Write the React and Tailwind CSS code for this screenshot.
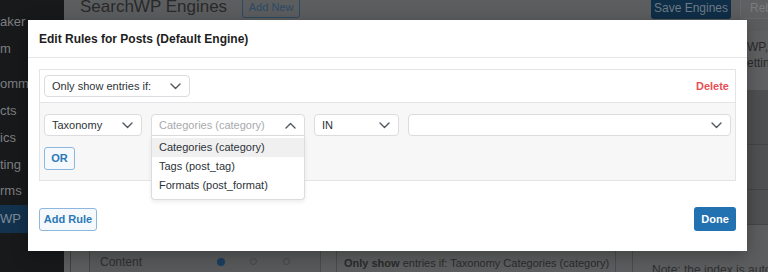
import React from "react";

const font = { fontFamily: "'Liberation Sans', Arial, sans-serif" };

function Chevron({ up = false, className = "" }) {
  return (
    <svg width="11" height="7" viewBox="0 0 11 7" className={className}>
      <path
        d={up ? "M1 6 L5.5 1.5 L10 6" : "M1 1 L5.5 5.5 L10 1"}
        fill="none"
        stroke="#50575e"
        strokeWidth="1.4"
        strokeLinecap="round"
        strokeLinejoin="round"
      />
    </svg>
  );
}

function Select({ label, placeholder = false, up = false, className = "", children }) {
  return (
    <div className={`relative ${className}`}>
      <div
        className={`flex h-[22px] items-center justify-between rounded-[4px] border border-[#dcdcde] bg-white pl-[7px] pr-[8px] text-[11px] ${
          placeholder ? "text-[#a7aaad]" : "text-[#2c3338]"
        } ${up ? "rounded-b-none" : ""}`}
      >
        <span className="whitespace-nowrap">{label}</span>
        <Chevron up={up} />
      </div>
      {children}
    </div>
  );
}

function OutlineButton({ children, className = "" }) {
  return (
    <div
      className={`flex h-[23px] items-center justify-center rounded-[3px] border border-[#8cb8e0] bg-[#f6f9fc] text-[11px] font-bold text-[#2a78b8] ${className}`}
    >
      {children}
    </div>
  );
}

export default function App() {
  return (
    <div className="relative flex h-[272px] w-[768px] overflow-hidden" style={font}>
      {/* sidebar */}
      <div className="flex w-[64px] shrink-0 flex-col overflow-hidden bg-[#18191b] text-[13px] text-[#7d7f81]">
        <div className="h-[14px]" />
        <div className="h-[27px] leading-[16px]">aker</div>
        <div className="h-[35px] leading-[16px]">m</div>
        <div className="h-[27px] leading-[16px]">omme</div>
        <div className="h-[27px] leading-[16px]">cts</div>
        <div className="h-[27px] leading-[16px]">ics</div>
        <div className="h-[26px] leading-[16px]">ting</div>
        <div className="h-[22px] leading-[16px]">rms</div>
        <div className="flex h-[28px] items-center bg-[#13324e] text-[#7d8a96]">WP</div>
        <div className="flex-1" />
      </div>

      {/* main */}
      <div className="flex min-w-0 flex-1 flex-col overflow-hidden bg-[#5c5d5e]">
        <div className="flex h-[26px] shrink-0 items-start pl-[16px]">
          <div className="mt-[-3px] shrink-0 whitespace-nowrap text-[17px] leading-[20px] text-[#28292a]">
            SearchWP Engines
          </div>
          <div className="ml-[15px] mt-[-4px] flex h-[22px] w-[58px] shrink-0 items-center justify-center rounded-[3px] border border-[#2c4a63] text-[11px] text-[#2b4a66]">
            Add New
          </div>
          <div className="flex-1" />
          <div className="mt-[-4px] flex h-[23px] w-[80px] shrink-0 items-center justify-center rounded-[3px] bg-[#0f2e47] text-[12px] text-[#6e7a85]">
            Save Engines
          </div>
          <div className="ml-[9px] mr-[-12px] mt-[-4px] flex h-[23px] w-[40px] shrink-0 items-center rounded-l-[3px] border border-[#666768] bg-[#5f6061] pl-[9px] text-[12px] text-[#7a7b7c]">
            Reb
          </div>
        </div>
        <div className="flex min-h-0 flex-1">
          <div className="flex w-[569px] shrink-0 flex-col">
            <div className="flex-1" />
            <div className="flex h-[21px]">
              <div className="ml-[6px] w-[19px] border-l border-[#3f4041]" />
              <div className="flex w-[231px] items-center border-l border-[#454647] bg-[#58595a] pl-[10px] text-[12px] text-[#2e2f30]">
                <span>Content</span>
                <span className="ml-[75px] h-[8px] w-[8px] rounded-full bg-[#1b3f5f]" />
                <span className="ml-[25px] h-[7px] w-[7px] rounded-full border border-[#454647]" />
                <span className="ml-[26px] h-[7px] w-[7px] rounded-full border border-[#454647]" />
              </div>
              <div className="w-[17px] border-l border-r border-[#4a4b4c]" />
              <div className="flex w-[278px] items-start overflow-hidden pl-[7px] pt-[4px] text-[11px] text-[#2a2b2c]">
                <span className="whitespace-nowrap">
                  <b>Only show</b> entries if: Taxonomy Categories (category)
                </span>
              </div>
              <div className="w-[18px] border-l border-r border-[#4a4b4c]" />
            </div>
          </div>
          <div className="flex min-w-0 flex-1 flex-col overflow-hidden">
            <div className="h-[5px]" />
            <div className="flex h-[59px] flex-col bg-[#5f6061] pt-[8px] text-[12px] leading-[16px] text-[#2a2b2c]">
              <span className="whitespace-nowrap pl-[114px]">WP,</span>
              <span className="whitespace-nowrap pl-[108px]">settings</span>
            </div>
            <div className="h-[55px] border-b border-[#444546] bg-[#4e4f50]" />
            <div className="h-[45px] border-b border-[#444546] bg-[#4f5051]" />
            <div className="h-[35px] border-b border-[#444546] bg-[#4f5051]" />
            <div className="flex flex-1 items-end pl-[19px] text-[12px] leading-[14px] text-[#2e2f30]">
              <span className="mb-[-5px] whitespace-nowrap">Note: the index is automatically updated</span>
            </div>
          </div>
        </div>
      </div>

      {/* modal */}
      <div className="absolute left-[28px] top-[20px] flex h-[231px] w-[719px] flex-col bg-white shadow-[0_4px_16px_rgba(0,0,0,0.3)]">
        <div className="flex h-[38px] items-center border-b border-[#e6e6e6] px-[11px] text-[12px] font-bold text-[#1e1e1e]">
          Edit Rules for Posts (Default Engine)
        </div>
        <div className="px-[11px] pt-[11px]">
          <div className="border border-[#e2e4e7]">
            <div className="flex h-[33px] items-center justify-between border-b border-[#e2e4e7] pl-[4px] pr-[6px]">
              <Select label="Only show entries if:" className="w-[146px]" />
              <span className="text-[11px] font-bold text-[#e65054]">Delete</span>
            </div>
            <div className="bg-[#f7f7f7] px-[4px] pb-[10px] pt-[11px]">
              <div className="flex gap-[9px]">
                <Select label="Taxonomy" className="w-[98px]" />
                <Select label="Categories (category)" placeholder up className="w-[154px]">
                  <div className="absolute left-0 top-full z-10 w-full rounded-b-[4px] border border-t-0 border-[#dcdcde] bg-white pb-[4px] pt-[2px] text-[11px] text-[#2c3338] shadow-[0_2px_4px_rgba(0,0,0,0.08)]">
                    <div className="flex h-[19px] items-center bg-[#f0f0f1] px-[7px]">Categories (category)</div>
                    <div className="flex h-[19px] items-center px-[7px]">Tags (post_tag)</div>
                    <div className="flex h-[19px] items-center px-[7px]">Formats (post_format)</div>
                  </div>
                </Select>
                <Select label="IN" className="w-[85px]" />
                <Select label="" className="flex-1" />
              </div>
              <OutlineButton className="mt-[11px] w-[31px]">OR</OutlineButton>
            </div>
          </div>
          <div className="mt-[26px] flex items-center justify-between">
            <OutlineButton className="w-[58px]">Add Rule</OutlineButton>
            <div className="flex h-[24px] w-[42px] items-center justify-center rounded-[3px] bg-[#2271b1] text-[11px] font-bold text-white">
              Done
            </div>
          </div>
        </div>
      </div>
    </div>
  );
}
